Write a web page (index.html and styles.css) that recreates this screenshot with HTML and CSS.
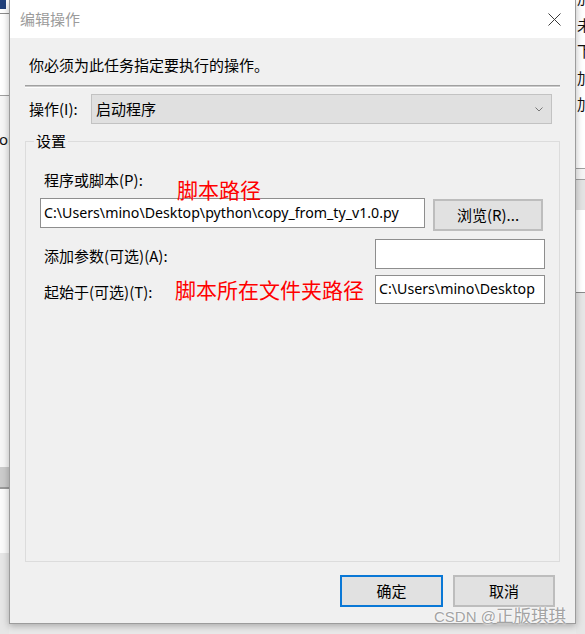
FILE: index.html
```html
<!DOCTYPE html>
<html lang="zh-CN">
<head>
<meta charset="utf-8">
<title>编辑操作</title>
<link rel="stylesheet" href="styles.css">
</head>
<body>
<div class="desk">
  <div class="strip strip-left">
    <div class="ls-top"><span class="ls-icon"></span></div>
    <div class="ls-white"></div>
    <div class="ls-pane"><span class="ls-text">or</span></div>
    <div class="ls-band"></div>
    <div class="ls-white2"></div>
    <div class="ls-foot"></div>
  </div>

  <div class="window">
    <div class="titlebar">
      <span class="title">编辑操作</span>
      <svg class="close" width="13" height="13" viewBox="0 0 13 13"><path d="M0.5 0.5 L12.5 12.5 M12.5 0.5 L0.5 12.5" stroke="#3a3a3a" stroke-width="1" fill="none"/></svg>
    </div>
    <div class="client">
      <p class="instr">你必须为此任务指定要执行的操作。</p>
      <div class="sep"></div>
      <div class="op-row">
        <span class="op-label">操作(I):</span>
        <div class="combo">
          <span class="combo-value">启动程序</span>
          <svg class="chevron" width="8" height="5" viewBox="0 0 8 5"><path d="M0.5 0.5 L4 4 L7.5 0.5" stroke="#777" stroke-width="1" fill="none"/></svg>
        </div>
      </div>
      <fieldset class="group">
        <legend class="group-title">设置</legend>
        <div class="group-body">
          <div class="field-label">程序或脚本(P):</div>
          <div class="path-row">
            <div class="input input-wide">C:\Users\mino\Desktop\python\copy_from_ty_v1.0.py</div>
            <button class="btn btn-browse">浏览(R)...</button>
          </div>
          <div class="arg-row">
            <span class="field-label row-label">添加参数(可选)(A):</span>
            <div class="input input-short"></div>
          </div>
          <div class="arg-row arg-row-last">
            <span class="field-label row-label">起始于(可选)(T):</span>
            <div class="input input-short input-low">C:\Users\mino\Desktop</div>
          </div>
          <span class="note note-path">脚本路径</span>
          <span class="note note-dir">脚本所在文件夹路径</span>
        </div>
      </fieldset>
      <div class="actions">
        <button class="btn btn-ok">确定</button>
        <button class="btn btn-cancel">取消</button>
      </div>
    </div>
    <div class="watermark"><span class="wm-latin">CSDN @</span><span class="wm-cjk">正版琪琪</span></div>
  </div>

  <div class="strip strip-right">
    <div class="rs-text">加<br>未<br>下<br>加<br>加</div>
    <div class="rs-gap"></div>
    <div class="rs-line"></div>
    <div class="rs-light"></div>
    <div class="rs-line"></div>
    <div class="rs-band"></div>
    <div class="rs-white"></div>
    <div class="rs-line rs-line-dark"></div>
    <div class="rs-foot"></div>
  </div>
</div>
</body>
</html>
```

FILE: styles.css
```css
html, body {
  margin: 0;
  padding: 0;
}
body {
  width: 585px;
  height: 634px;
  overflow: hidden;
  font-family: "Noto Sans CJK SC", "Noto Sans", sans-serif;
  font-size: 15px;
  color: #000;
}
.desk {
  display: flex;
  align-items: flex-start;
  width: 585px;
  height: 634px;
  background: #e9e9e9;
}

/* ---------- background strips ---------- */
.strip {
  height: 634px;
  overflow: hidden;
  flex: none;
}
.strip-left {
  width: 9px;
  display: flex;
  flex-direction: column;
}
.ls-top {
  height: 14px;
  background: #fff;
  border-bottom: 1px solid #8c8c8c;
  box-sizing: border-box;
}
.ls-icon {
  display: block;
  width: 6px;
  height: 9px;
  background: #20407a;
}
.ls-white {
  height: 82px;
  background: #fff;
  border-bottom: 1px solid #a0a0a0;
  box-sizing: border-box;
}
.ls-pane {
  height: 371px;
  background: #f6f6f6;
  padding-top: 33px;
  box-sizing: border-box;
}
.ls-text {
  display: block;
  font-family: "Noto Sans", sans-serif;
  font-size: 15px;
  line-height: 20px;
  margin-left: -1px;
  color: #111;
}
.ls-band {
  height: 22px;
  background: #cbcbcb;
  border-bottom: 2px solid #9a9a9a;
  box-sizing: border-box;
}
.ls-white2 {
  height: 64px;
  background: #fbfbfb;
}
.ls-foot {
  flex: 1;
  background: #e6e6e6;
}

.strip-right {
  flex: 1;
  display: flex;
  flex-direction: column;
}
.rs-text {
  height: 175px;
  margin-bottom: -15px;
  transform: translateY(-15px);
  background: #fff;
  font-size: 15px;
  line-height: 26.5px;
  color: #111;
  padding-left: 1px;
  box-sizing: border-box;
}
.rs-gap {
  height: 8px;
  background: #fff;
}
.rs-line {
  height: 1px;
  background: #a0a0a0;
}
.rs-light {
  height: 10px;
  background: #f5f5f5;
}
.rs-band {
  height: 30px;
  background: #e3e3e3;
}
.rs-white {
  height: 82px;
  background: #fff;
}
.rs-line-dark {
  background: #8a8a8a;
}
.rs-foot {
  flex: 1;
  background: #e6e6e6;
}

/* ---------- window ---------- */
.window {
  position: relative;
  z-index: 1;
  flex: none;
  width: 567px;
  height: 624px;
  box-sizing: border-box;
  border: 1px solid #9c9c9c;
  border-top: 0;
  background: #f0f0f0;
  box-shadow: 0 2px 7px rgba(0, 0, 0, 0.28);
  display: flex;
  flex-direction: column;
}
.titlebar {
  height: 38px;
  flex: none;
  background: #fff;
  display: flex;
  align-items: center;
  justify-content: space-between;
  padding-left: 10px;
}
.title {
  font-size: 15px;
  line-height: 20px;
  color: #9b9b9b;
}
.close {
  display: block;
  margin-right: 14px;
}

.client {
  flex: 1;
  background: #f0f0f0;
  padding-top: 17px;
}
.instr {
  margin: 0 0 0 19px;
  font-size: 15px;
  line-height: 20px;
}
.sep {
  margin: 10px 15px 0 15px;
  border-top: 1px solid #a0a0a0;
  border-bottom: 1px solid #fdfdfd;
  background: #c9c9c9;
  height: 1px;
}

.op-row {
  display: flex;
  align-items: center;
  margin-top: 6px;
  padding: 0 23px 0 19px;
  height: 30px;
}
.op-label {
  width: 62px;
  flex: none;
  line-height: 20px;
}
.combo {
  flex: 1;
  height: 30px;
  box-sizing: border-box;
  border: 1px solid #c2c2c2;
  background: #e0e0e0;
  display: flex;
  align-items: center;
  justify-content: space-between;
  padding: 0 8px 0 4px;
}
.combo-value {
  line-height: 20px;
}
.chevron {
  display: block;
}

/* ---------- group ---------- */
.group {
  margin: 7px 15px 0 15px;
  padding: 0;
  border: 1px solid #dcdcdc;
  height: 431px;
  box-sizing: border-box;
  min-width: 0;
}
.group-title {
  margin-left: 8px;
  padding: 0 2px;
  font-size: 15px;
  line-height: 20px;
}
.group-body {
  position: relative;
  padding: 19px 14px 0 14px;
}
.field-label {
  margin-left: 4px;
  font-size: 15px;
  line-height: 20px;
}
.path-row {
  display: flex;
  align-items: flex-start;
  margin-top: 8px;
}
.input {
  box-sizing: border-box;
  height: 30px;
  border: 1px solid #8e8e8e;
  background: #fff;
  padding: 0 3px;
  font-family: "Noto Sans", sans-serif;
  font-size: 14.2px;
  line-height: 27px;
  white-space: nowrap;
  overflow: hidden;
}
.input-wide {
  width: 385px;
  flex: none;
}
.input-short {
  width: 170px;
  flex: none;
  margin-left: auto;
}
.input-low {
  height: 29px;
  line-height: 26px;
}
.btn {
  font-family: "Noto Sans CJK SC", sans-serif;
  font-size: 15px;
  line-height: 20px;
  color: #000;
  background: #e1e1e1;
  border: 2px solid #bdbdbd;
  box-sizing: border-box;
  padding: 0;
  margin: 0;
  display: flex;
  align-items: center;
  justify-content: center;
}
.btn-browse {
  width: 110px;
  height: 32px;
  margin-left: 8px;
  margin-top: 1px;
}
.arg-row {
  display: flex;
  align-items: flex-start;
  margin-top: 8px;
}
.arg-row-last {
  margin-top: 6px;
}
.row-label {
  margin-top: 7px;
}
.note {
  position: absolute;
  color: #ff0000;
  font-size: 21px;
  line-height: 16px;
  white-space: nowrap;
}
.note-path {
  left: 151px;
  top: 30px;
}
.note-dir {
  left: 149px;
  top: 130px;
}

/* ---------- actions ---------- */
.actions {
  display: flex;
  justify-content: flex-end;
  gap: 10px;
  padding-right: 20px;
  margin-top: 13px;
}
.btn-ok {
  width: 103px;
  height: 32px;
  border-color: #0a78d6;
}
.btn-cancel {
  width: 102px;
  height: 32px;
}

/* ---------- watermark ---------- */
.watermark {
  position: absolute;
  left: 424px;
  top: 604px;
  white-space: nowrap;
  color: #a3a3a3;
  text-shadow: 0 0 2px #fff, 0 0 2px #fff;
  line-height: 22px;
}
.wm-latin {
  font-family: "Liberation Sans", sans-serif;
  font-size: 15px;
}
.wm-cjk {
  font-size: 17.5px;
}
```
